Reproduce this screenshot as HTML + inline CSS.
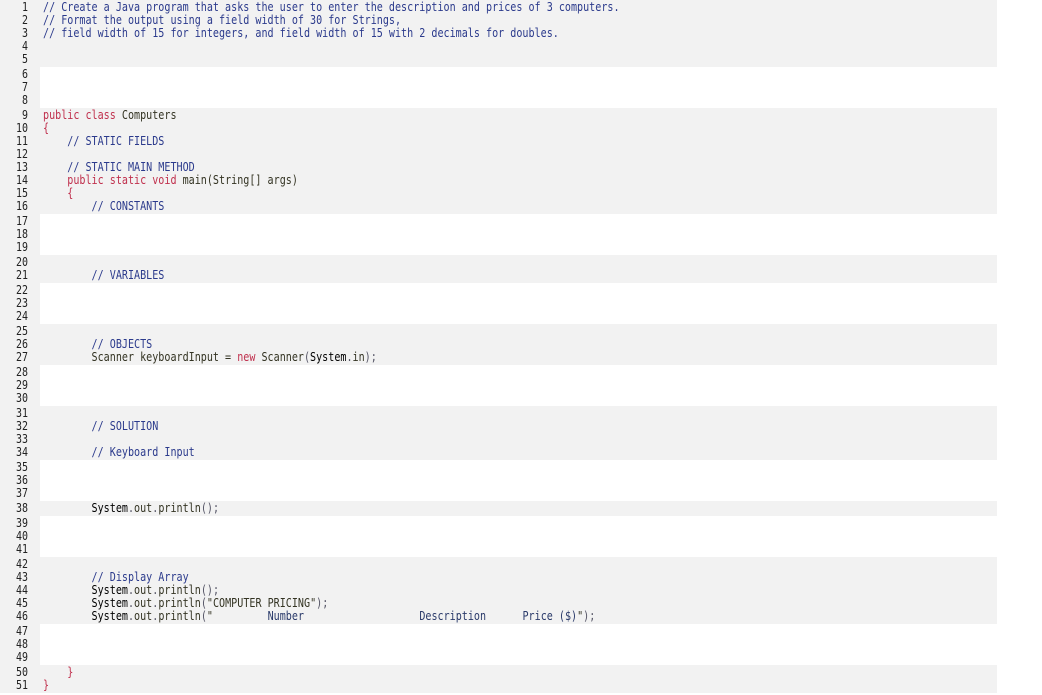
<!DOCTYPE html>
<html><head><meta charset="utf-8"><style>
html,body{margin:0;padding:0;background:#fff;width:1042px;height:695px;overflow:hidden}
#ed{position:absolute;left:0;top:0;width:997px;font-family:"DejaVu Sans Mono","Liberation Mono",monospace;font-size:12px;}
.r{padding:1px 0;position:relative}
.g{background:#f2f2f2}
.w{background:#fff;border-left:40px solid #f2f2f2}
.l{height:13px;line-height:13px;white-space:pre;position:relative;color:#333322}
.n{position:absolute;left:-12px;width:40px;text-align:right;color:#222;transform:scaleX(0.83);transform-origin:right center}
.w .n{left:-52px}
.c{position:absolute;left:43px;transform:scaleX(0.84);transform-origin:left center}
.w .c{left:3px}
.cm{color:#2b3a8c}
.k{color:#c0304d}
.s{color:#000}
.p{color:#556}
.st{color:#2a3a6a}
</style></head><body><div id="ed">
<div class="r g">
<div class="l"><span class="n">1</span><span class="c cm">// Create a Java program that asks the user to enter the description and prices of 3 computers.</span></div>
<div class="l"><span class="n">2</span><span class="c cm">// Format the output using a field width of 30 for Strings,</span></div>
<div class="l"><span class="n">3</span><span class="c cm">// field width of 15 for integers, and field width of 15 with 2 decimals for doubles.</span></div>
<div class="l"><span class="n">4</span></div>
<div class="l"><span class="n">5</span></div>
</div>
<div class="r w">
<div class="l"><span class="n">6</span></div><div class="l"><span class="n">7</span></div><div class="l"><span class="n">8</span></div>
</div>
<div class="r g">
<div class="l"><span class="n">9</span><span class="c"><span class="k">public class</span> Computers</span></div>
<div class="l"><span class="n">10</span><span class="c k">{</span></div>
<div class="l"><span class="n">11</span><span class="c cm">    // STATIC FIELDS</span></div>
<div class="l"><span class="n">12</span></div>
<div class="l"><span class="n">13</span><span class="c cm">    // STATIC MAIN METHOD</span></div>
<div class="l"><span class="n">14</span><span class="c">    <span class="k">public static void</span> main(String[] args)</span></div>
<div class="l"><span class="n">15</span><span class="c k">    {</span></div>
<div class="l"><span class="n">16</span><span class="c cm">        // CONSTANTS</span></div>
</div>
<div class="r w">
<div class="l"><span class="n">17</span></div><div class="l"><span class="n">18</span></div><div class="l"><span class="n">19</span></div>
</div>
<div class="r g">
<div class="l"><span class="n">20</span></div>
<div class="l"><span class="n">21</span><span class="c cm">        // VARIABLES</span></div>
</div>
<div class="r w">
<div class="l"><span class="n">22</span></div><div class="l"><span class="n">23</span></div><div class="l"><span class="n">24</span></div>
</div>
<div class="r g">
<div class="l"><span class="n">25</span></div>
<div class="l"><span class="n">26</span><span class="c cm">        // OBJECTS</span></div>
<div class="l"><span class="n">27</span><span class="c">        Scanner keyboardInput = <span class="k">new</span> Scanner<span class="p">(</span><span class="s">System</span><span class="p">.</span>in<span class="p">);</span></span></div>
</div>
<div class="r w">
<div class="l"><span class="n">28</span></div><div class="l"><span class="n">29</span></div><div class="l"><span class="n">30</span></div>
</div>
<div class="r g">
<div class="l"><span class="n">31</span></div>
<div class="l"><span class="n">32</span><span class="c cm">        // SOLUTION</span></div>
<div class="l"><span class="n">33</span></div>
<div class="l"><span class="n">34</span><span class="c cm">        // Keyboard Input</span></div>
</div>
<div class="r w">
<div class="l"><span class="n">35</span></div><div class="l"><span class="n">36</span></div><div class="l"><span class="n">37</span></div>
</div>
<div class="r g">
<div class="l"><span class="n">38</span><span class="c">        <span class="s">System</span><span class="p">.</span>out<span class="p">.</span>println<span class="p">();</span></span></div>
</div>
<div class="r w">
<div class="l"><span class="n">39</span></div><div class="l"><span class="n">40</span></div><div class="l"><span class="n">41</span></div>
</div>
<div class="r g">
<div class="l"><span class="n">42</span></div>
<div class="l"><span class="n">43</span><span class="c cm">        // Display Array</span></div>
<div class="l"><span class="n">44</span><span class="c">        <span class="s">System</span><span class="p">.</span>out<span class="p">.</span>println<span class="p">();</span></span></div>
<div class="l"><span class="n">45</span><span class="c">        <span class="s">System</span><span class="p">.</span>out<span class="p">.</span>println<span class="p">(</span>"COMPUTER PRICING"<span class="p">);</span></span></div>
<div class="l"><span class="n">46</span><span class="c">        <span class="s">System</span><span class="p">.</span>out<span class="p">.</span>println<span class="p">(</span>"<span class="st">         Number                   Description      Price ($)</span>"<span class="p">);</span></span></div>
</div>
<div class="r w">
<div class="l"><span class="n">47</span></div><div class="l"><span class="n">48</span></div><div class="l"><span class="n">49</span></div>
</div>
<div class="r g">
<div class="l"><span class="n">50</span><span class="c k">    }</span></div>
<div class="l"><span class="n">51</span><span class="c k">}</span></div>
</div>
</div></body></html>
